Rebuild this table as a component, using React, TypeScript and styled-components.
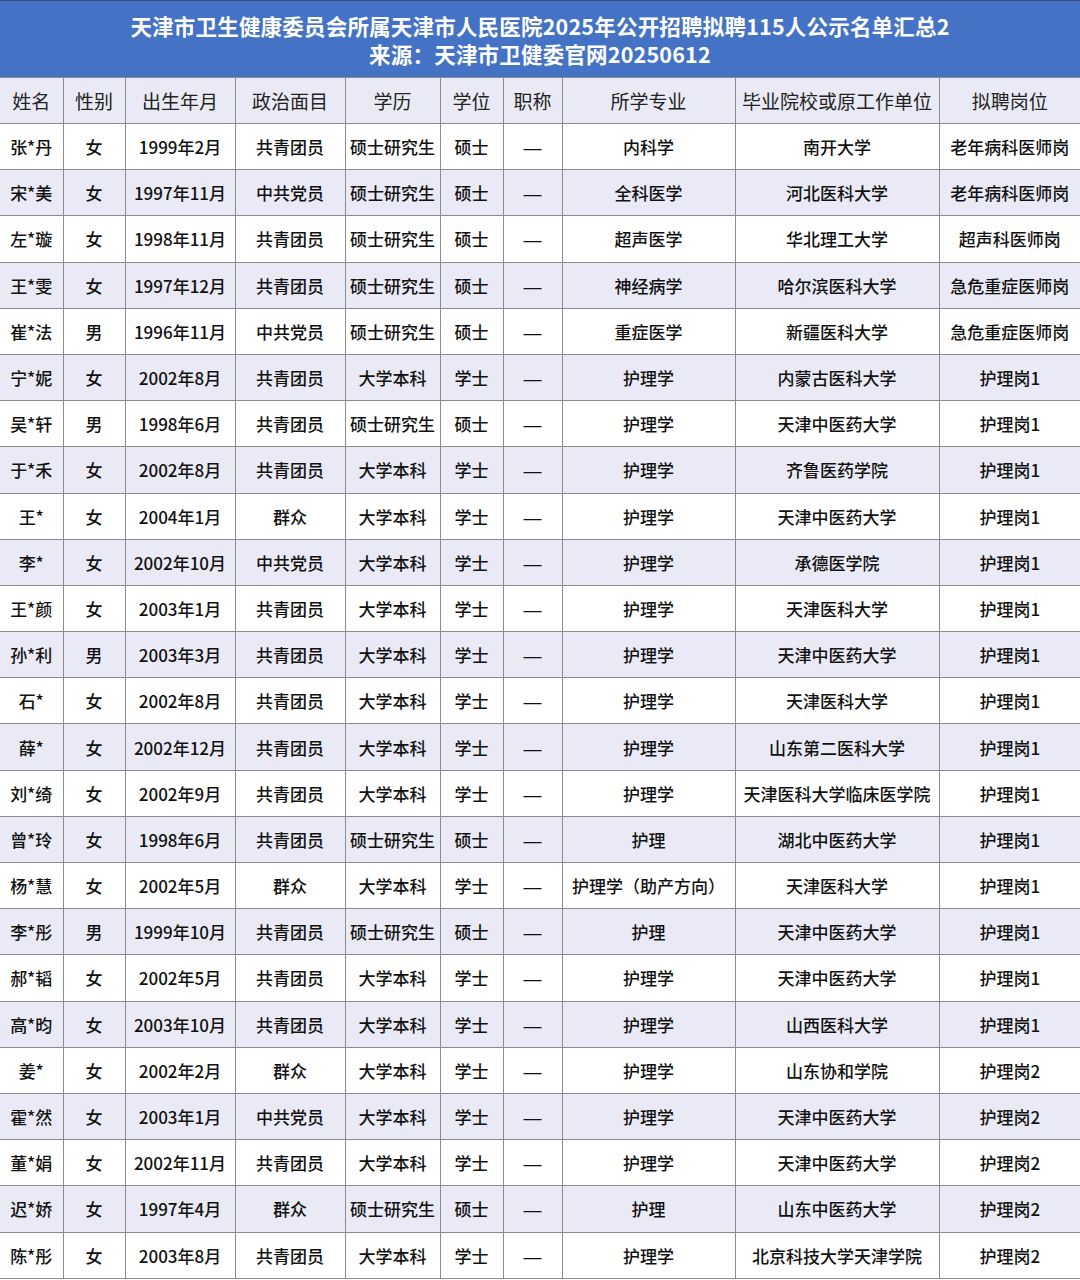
import React from "react";
import styled, { createGlobalStyle } from "styled-components";

const GlobalStyle = createGlobalStyle`
  html, body {
    margin: 0;
    padding: 0;
    background: #ffffff;
  }
  body {
    font-family: "Noto Sans CJK SC", "Noto Sans", sans-serif;
  }
`;

type Row = [string, string, string, string, string, string, string, string, string, string];

const rows: Row[] = [
  ["张*丹", "女", "1999年2月", "共青团员", "硕士研究生", "硕士", "—", "内科学", "南开大学", "老年病科医师岗"],
  ["宋*美", "女", "1997年11月", "中共党员", "硕士研究生", "硕士", "—", "全科医学", "河北医科大学", "老年病科医师岗"],
  ["左*璇", "女", "1998年11月", "共青团员", "硕士研究生", "硕士", "—", "超声医学", "华北理工大学", "超声科医师岗"],
  ["王*雯", "女", "1997年12月", "共青团员", "硕士研究生", "硕士", "—", "神经病学", "哈尔滨医科大学", "急危重症医师岗"],
  ["崔*法", "男", "1996年11月", "中共党员", "硕士研究生", "硕士", "—", "重症医学", "新疆医科大学", "急危重症医师岗"],
  ["宁*妮", "女", "2002年8月", "共青团员", "大学本科", "学士", "—", "护理学", "内蒙古医科大学", "护理岗1"],
  ["吴*轩", "男", "1998年6月", "共青团员", "硕士研究生", "硕士", "—", "护理学", "天津中医药大学", "护理岗1"],
  ["于*禾", "女", "2002年8月", "共青团员", "大学本科", "学士", "—", "护理学", "齐鲁医药学院", "护理岗1"],
  ["王*", "女", "2004年1月", "群众", "大学本科", "学士", "—", "护理学", "天津中医药大学", "护理岗1"],
  ["李*", "女", "2002年10月", "中共党员", "大学本科", "学士", "—", "护理学", "承德医学院", "护理岗1"],
  ["王*颜", "女", "2003年1月", "共青团员", "大学本科", "学士", "—", "护理学", "天津医科大学", "护理岗1"],
  ["孙*利", "男", "2003年3月", "共青团员", "大学本科", "学士", "—", "护理学", "天津中医药大学", "护理岗1"],
  ["石*", "女", "2002年8月", "共青团员", "大学本科", "学士", "—", "护理学", "天津医科大学", "护理岗1"],
  ["薛*", "女", "2002年12月", "共青团员", "大学本科", "学士", "—", "护理学", "山东第二医科大学", "护理岗1"],
  ["刘*绮", "女", "2002年9月", "共青团员", "大学本科", "学士", "—", "护理学", "天津医科大学临床医学院", "护理岗1"],
  ["曾*玲", "女", "1998年6月", "共青团员", "硕士研究生", "硕士", "—", "护理", "湖北中医药大学", "护理岗1"],
  ["杨*慧", "女", "2002年5月", "群众", "大学本科", "学士", "—", "护理学（助产方向）", "天津医科大学", "护理岗1"],
  ["李*彤", "男", "1999年10月", "共青团员", "硕士研究生", "硕士", "—", "护理", "天津中医药大学", "护理岗1"],
  ["郝*韬", "女", "2002年5月", "共青团员", "大学本科", "学士", "—", "护理学", "天津中医药大学", "护理岗1"],
  ["高*昀", "女", "2003年10月", "共青团员", "大学本科", "学士", "—", "护理学", "山西医科大学", "护理岗1"],
  ["姜*", "女", "2002年2月", "群众", "大学本科", "学士", "—", "护理学", "山东协和学院", "护理岗2"],
  ["霍*然", "女", "2003年1月", "中共党员", "大学本科", "学士", "—", "护理学", "天津中医药大学", "护理岗2"],
  ["董*娟", "女", "2002年11月", "共青团员", "大学本科", "学士", "—", "护理学", "天津中医药大学", "护理岗2"],
  ["迟*娇", "女", "1997年4月", "群众", "硕士研究生", "硕士", "—", "护理", "山东中医药大学", "护理岗2"],
  ["陈*彤", "女", "2003年8月", "共青团员", "大学本科", "学士", "—", "护理学", "北京科技大学天津学院", "护理岗2"],
];

const columns = [
  { title: "姓名", width: 63 },
  { title: "性别", width: 62 },
  { title: "出生年月", width: 110 },
  { title: "政治面目", width: 110 },
  { title: "学历", width: 95 },
  { title: "学位", width: 63 },
  { title: "职称", width: 59 },
  { title: "所学专业", width: 173 },
  { title: "毕业院校或原工作单位", width: 204 },
  { title: "拟聘岗位", width: 141 },
];

export default function App() {
  return (
    <>
      <GlobalStyle />
      <Page>
        <TitleBar>
          <TitleLine>天津市卫生健康委员会所属天津市人民医院2025年公开招聘拟聘115人公示名单汇总2</TitleLine>
          <TitleLine>来源：天津市卫健委官网20250612</TitleLine>
        </TitleBar>
        <Table>
          <colgroup>
            {columns.map((c) => (
              <col key={c.title} style={{ width: c.width }} />
            ))}
          </colgroup>
          <thead>
            <HeadRow>
              {columns.map((c) => (
                <HeadCell key={c.title}>{c.title}</HeadCell>
              ))}
            </HeadRow>
          </thead>
          <tbody>
            {rows.map((r, i) => (
              <DataRow key={i} $tinted={i % 2 === 1}>
                {r.map((v, j) =>
                  v === "—" ? (
                    <Cell key={j}>
                      <Dash>—</Dash>
                    </Cell>
                  ) : (
                    <Cell key={j}>{v}</Cell>
                  )
                )}
              </DataRow>
            ))}
          </tbody>
        </Table>
      </Page>
    </>
  );
}

const Page = styled.div`
  width: 1080px;
  background: #ffffff;
`;

const TitleBar = styled.div`
  height: 77px;
  box-sizing: border-box;
  background: #4472c4;
  border-top: 1px solid #3a4d75;
  display: flex;
  flex-direction: column;
  align-items: center;
  justify-content: center;
  padding-top: 1px;
`;

const TitleLine = styled.div`
  color: #ffffff;
  font-size: 21.5px;
  font-weight: 700;
  line-height: 28px;
  letter-spacing: 0.2px;
  white-space: nowrap;
`;

const Table = styled.table`
  width: 1080px;
  table-layout: fixed;
  border-collapse: collapse;
`;

const HeadRow = styled.tr`
  height: 46px;
  background: #e9eaf5;
`;

const HeadCell = styled.th`
  border: 1.5px solid #8c8c8c;
  padding: 0;
  font-size: 19px;
  font-weight: 400;
  color: #222222;
  text-align: center;
  white-space: nowrap;
  &:first-child {
    border-left: none;
  }
  &:last-child {
    border-right: none;
  }
`;

const DataRow = styled.tr<{ $tinted: boolean }>`
  height: 46.2px;
  background: ${(p) => (p.$tinted ? "#e9eaf5" : "#ffffff")};
`;

const Cell = styled.td`
  border: 1.5px solid #8c8c8c;
  padding: 0;
  font-size: 17px;
  font-weight: 500;
  color: #111111;
  text-align: center;
  white-space: nowrap;
  overflow: hidden;
  &:first-child {
    border-left: none;
  }
  &:last-child {
    border-right: none;
  }
`;

const Dash = styled.span`
  font-family: "Liberation Sans", sans-serif;
  font-size: 18px;
  font-weight: 400;
`;
